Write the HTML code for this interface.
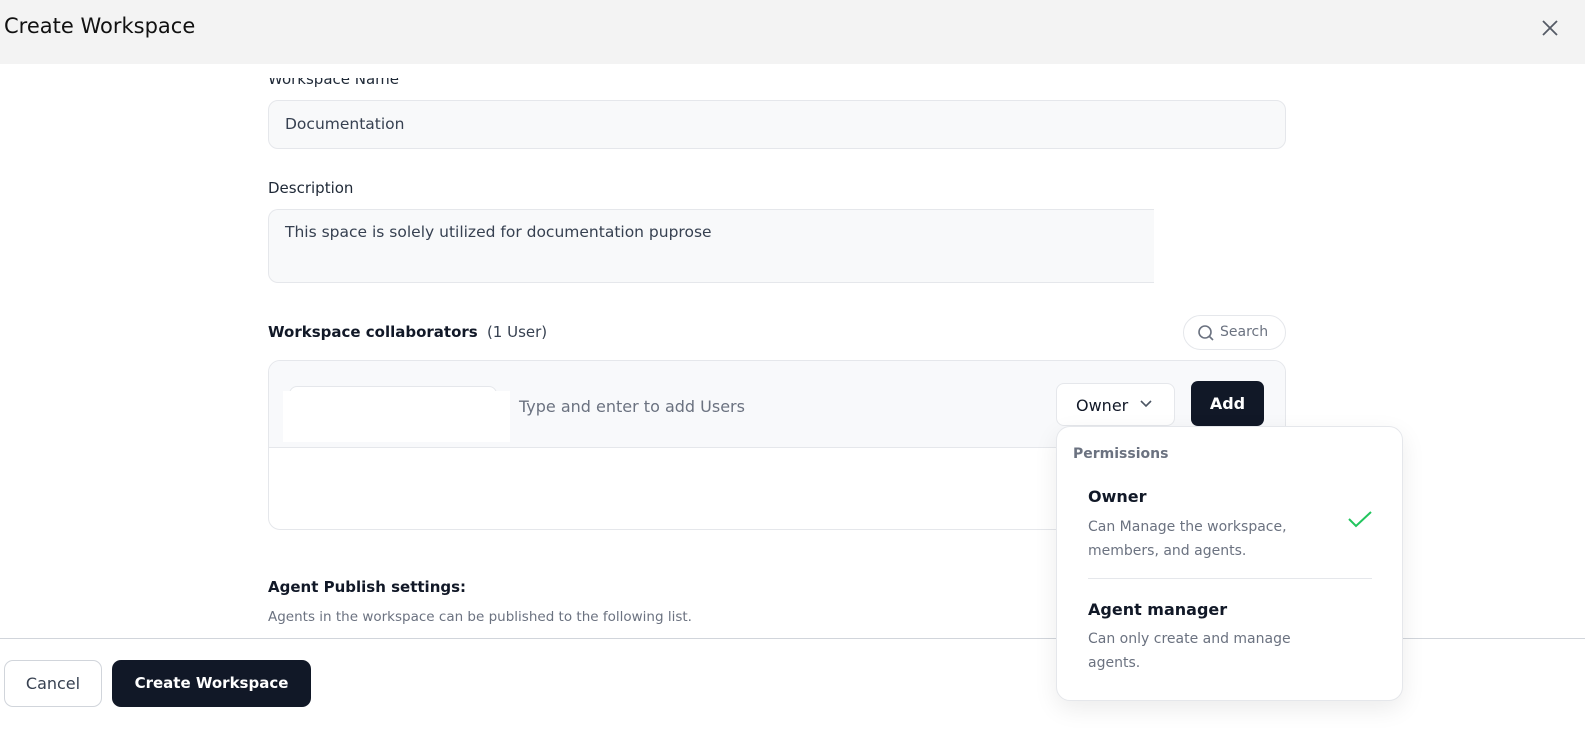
<!DOCTYPE html>
<html><head><style>
*{box-sizing:border-box;margin:0;padding:0}
body{width:1585px;height:733px;position:relative;overflow:hidden;background:#fff;font-family:"DejaVu Sans","Liberation Sans",sans-serif;color:#111827}
.a{position:absolute;white-space:nowrap}
</style></head><body>
<div class="a" style="left:0;top:0;width:1585px;height:64px;background:#f3f3f3"></div>
<div class="a" style="left:4px;top:14px;font-size:21px;color:#111">Create Workspace</div>
<svg class="a" style="left:1541px;top:19px" width="18" height="18" viewBox="0 0 18 18"><path d="M2 2L16 16M16 2L2 16" stroke="#555b66" stroke-width="1.8"/></svg>

<div class="a" style="left:0;top:64px;width:1585px;height:562px;overflow:hidden">
 <div class="a" style="left:268px;top:6px;font-size:15px;color:#1f2937">Workspace Name</div>
 <div class="a" style="left:0;top:0;width:1585px;height:14px;background:#fff"></div>
 <div class="a" style="left:268px;top:36px;width:1018px;height:49px;background:#f8f9fa;border:1px solid #e5e7eb;border-radius:10px;padding:14px 16px;font-size:15.5px;color:#374151">Documentation</div>
 <div class="a" style="left:268px;top:115px;font-size:15px;color:#1f2937">Description</div>
 <div class="a" style="left:268px;top:145px;width:886px;height:74px;background:#f8f9fa;border:1px solid #e5e7eb;border-right:none;border-radius:10px 0 0 10px;padding:13px 16px;font-size:15.5px;color:#374151">This space is solely utilized for documentation puprose</div>
 <div class="a" style="left:268px;top:259px;font-size:15px;font-weight:bold;color:#111827">Workspace collaborators <span style="font-weight:normal;color:#374151;margin-left:4px">(1 User)</span></div>
 <div class="a" style="left:1183px;top:251px;width:103px;height:35px;border:1px solid #e5e7eb;border-radius:18px;font-size:14px;color:#6b7280;padding:8px 0 0 36px">Search</div>
 <svg class="a" style="left:1197px;top:260px" width="18" height="18" viewBox="0 0 18 18"><circle cx="8" cy="8" r="6" fill="none" stroke="#6b7280" stroke-width="1.6"/><path d="M12.5 12.5L16 16" stroke="#6b7280" stroke-width="1.6"/></svg>
 <div class="a" style="left:268px;top:296px;width:1018px;height:170px;border:1px solid #e5e7eb;border-radius:12px;overflow:hidden">
  <div style="height:87px;background:#f8f9fb;border-bottom:1px solid #e5e7eb"></div>
 </div>
 <div class="a" style="left:289px;top:322px;width:208px;height:20px;border:1px solid #e5e7eb;border-radius:8px;background:#fff"></div>
 <div class="a" style="left:283px;top:327px;width:227px;height:51px;background:#fff"></div>
 <div class="a" style="left:519px;top:333px;font-size:16px;color:#6b7280">Type and enter to add Users</div>
 <div class="a" style="left:1056px;top:319px;width:119px;height:43px;background:#fff;border:1px solid #e5e7eb;border-radius:8px;padding:12px 0 0 19px;font-size:16px;color:#111827">Owner</div>
 <svg class="a" style="left:1139px;top:335px" width="14" height="10" viewBox="0 0 14 10"><path d="M2 2L7 7L12 2" fill="none" stroke="#4b5563" stroke-width="1.6"/></svg>
 <div class="a" style="left:1191px;top:317px;width:73px;height:45px;background:#111827;border-radius:7px;color:#fff;font-weight:bold;font-size:16px;text-align:center;line-height:45px">Add</div>
 <div class="a" style="left:268px;top:514px;font-size:15px;font-weight:bold;color:#111827">Agent Publish settings:</div>
 <div class="a" style="left:268px;top:545px;font-size:13.5px;color:#6b7280">Agents in the workspace can be published to the following list.</div>
</div>
<div class="a" style="left:0;top:638px;width:1585px;height:1px;background:#d1d5db"></div>
<div class="a" style="left:4px;top:660px;width:98px;height:47px;border:1px solid #d1d5db;border-radius:9px;text-align:center;line-height:45px;font-size:16px;color:#374151">Cancel</div>
<div class="a" style="left:112px;top:660px;width:199px;height:47px;background:#111827;border-radius:9px;text-align:center;line-height:47px;font-size:15px;font-weight:bold;color:#fff">Create Workspace</div>

<div class="a" style="left:1056px;top:426px;width:347px;height:275px;background:#fff;border:1px solid #e5e7eb;border-radius:14px;box-shadow:0 8px 24px rgba(0,0,0,0.08)">
 <div class="a" style="left:16px;top:19px;font-size:14px;font-weight:bold;color:#6b7280">Permissions</div>
 <div class="a" style="left:31px;top:60px;font-size:16px;font-weight:bold;color:#111827">Owner</div>
 <div class="a" style="left:31px;top:88px;font-size:14px;line-height:24px;color:#6b7280">Can Manage the workspace,<br>members, and agents.</div>
 <svg class="a" style="left:290px;top:82px" width="26" height="20" viewBox="0 0 26 20"><path d="M2 10L9 17L24 3" fill="none" stroke="#22c55e" stroke-width="2"/></svg>
 <div class="a" style="left:31px;top:151px;width:284px;height:1px;background:#e5e7eb"></div>
 <div class="a" style="left:31px;top:173px;font-size:16px;font-weight:bold;color:#111827">Agent manager</div>
 <div class="a" style="left:31px;top:200px;font-size:14px;line-height:24px;color:#6b7280">Can only create and manage<br>agents.</div>
</div>
</body></html>
